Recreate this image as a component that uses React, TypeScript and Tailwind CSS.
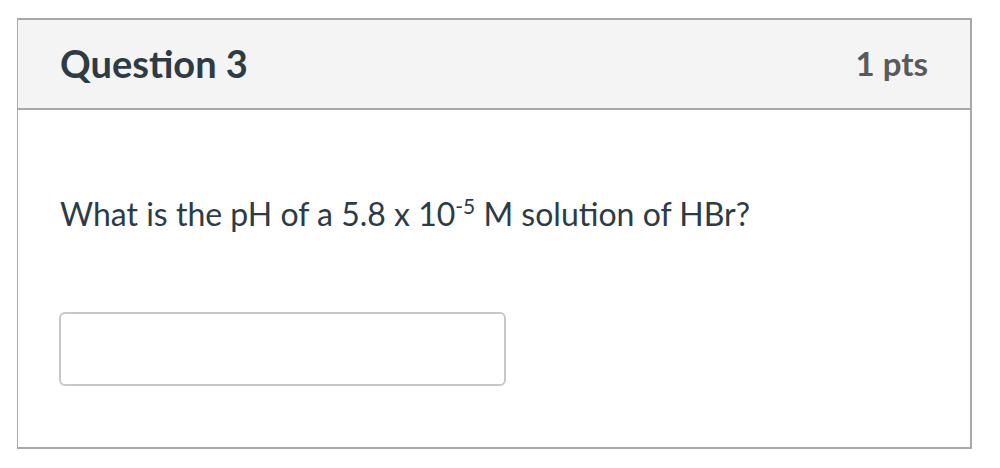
export default function App() {
  return (
    <div className="min-h-screen bg-white pt-[18px] pl-[17px]" style={{ fontFamily: 'Lato, "Open Sans", sans-serif' }}>
      <div className="w-[955px] h-[431px] border-2 border-[#a8a8a8] border-l-[1.5px] flex flex-col">
        {/* Header */}
        <div className="h-[90px] bg-[#f4f4f4] border-b-2 border-[#a8a8a8] flex items-center justify-between pl-[42px] pr-[42px]">
          <h2 className="text-[38px] font-bold text-[#2d3b45] leading-none -mt-[2px]">Question 3</h2>
          <div className="text-[33px] font-bold text-[#5a5a5a] leading-none -mt-[2px]">1 pts</div>
        </div>

        {/* Body */}
        <div className="flex-1 pl-[42px] pt-[88px]">
          <p className="text-[32px] text-[#2d3b45] leading-none">
            What is the pH of a 5.8 x 10<sup className="text-[21px] -top-[0.55em]">-5</sup> M solution of HBr?
          </p>
          <input
            type="text"
            className="mt-[82px] -ml-[1px] block w-[447px] h-[74px] border-2 border-[#c8c8c8] rounded-[6px] bg-white"
          />
        </div>
      </div>
    </div>
  );
}
